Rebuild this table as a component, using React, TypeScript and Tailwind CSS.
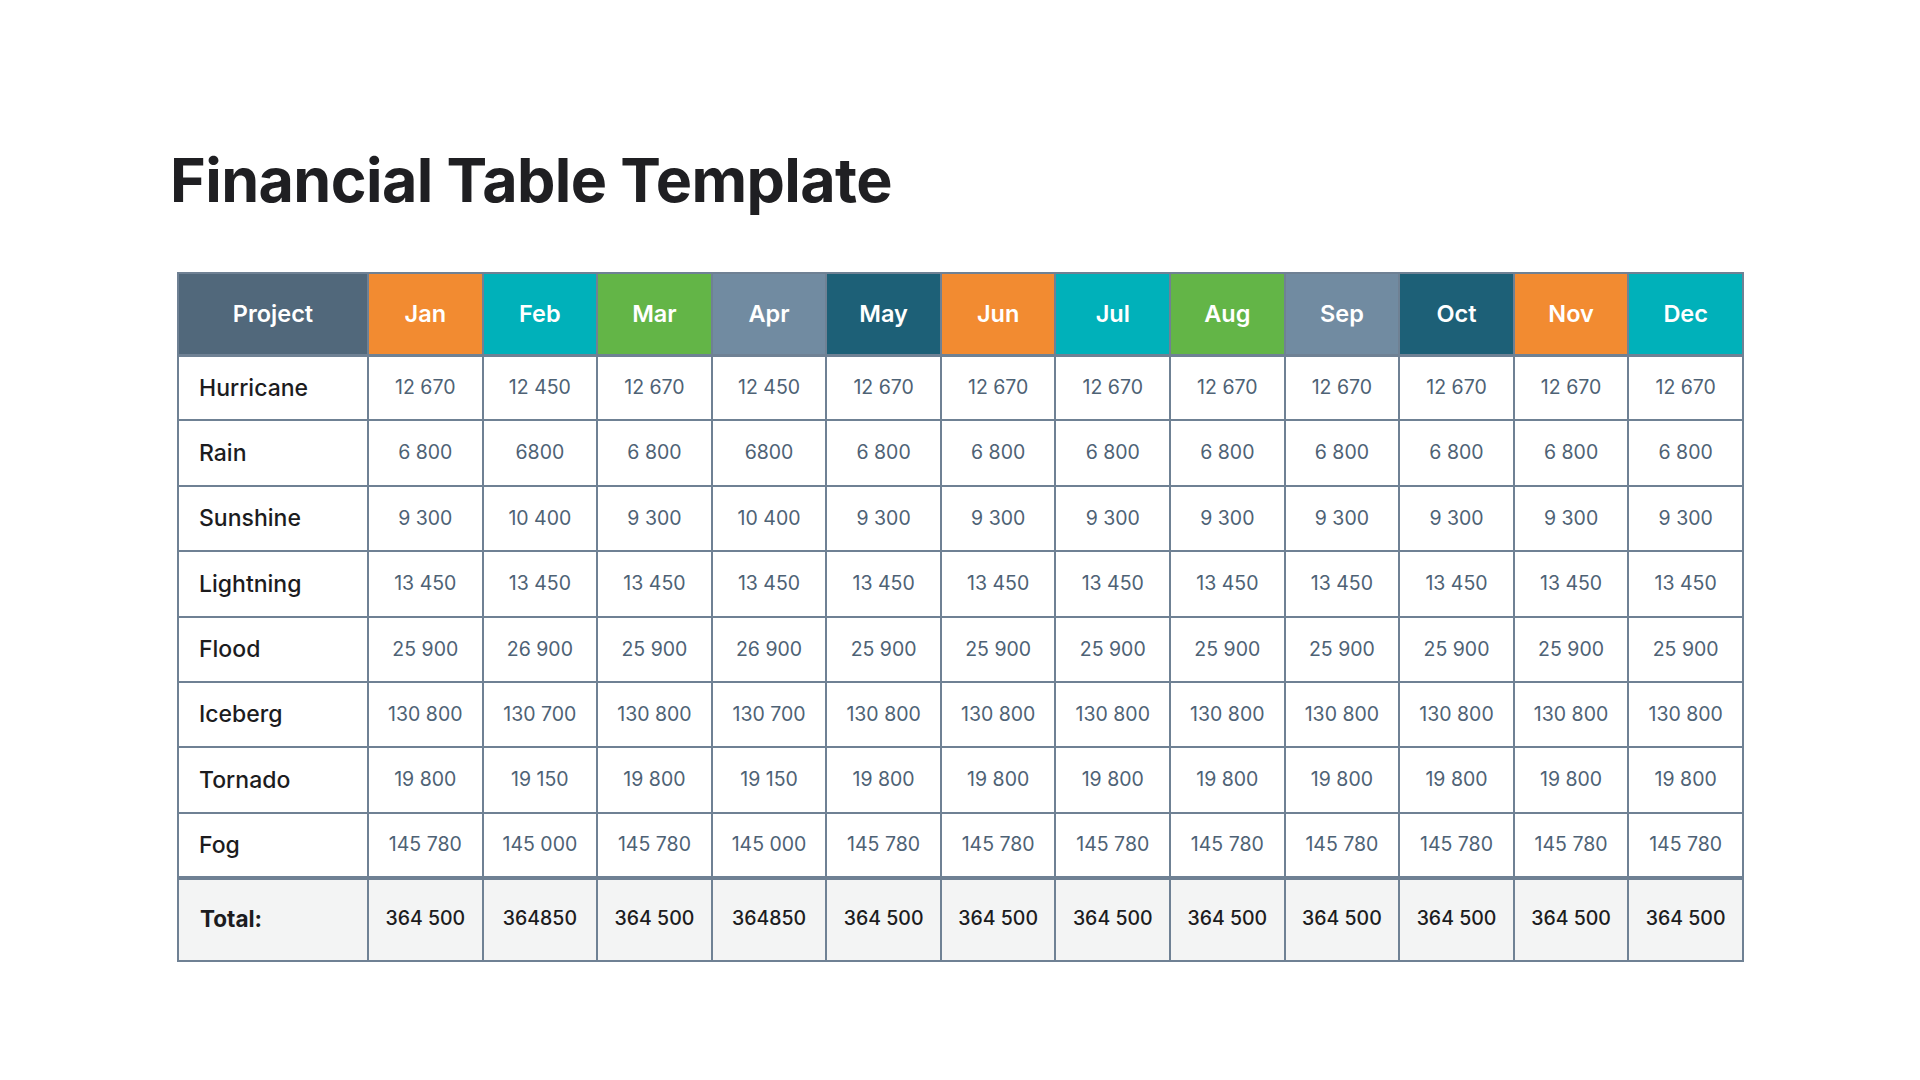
const months = [
  { name: "Jan", bg: "bg-[#f28b31]" },
  { name: "Feb", bg: "bg-[#00b1ba]" },
  { name: "Mar", bg: "bg-[#63b547]" },
  { name: "Apr", bg: "bg-[#718ba1]" },
  { name: "May", bg: "bg-[#1d6077]" },
  { name: "Jun", bg: "bg-[#f28b31]" },
  { name: "Jul", bg: "bg-[#00b1ba]" },
  { name: "Aug", bg: "bg-[#63b547]" },
  { name: "Sep", bg: "bg-[#718ba1]" },
  { name: "Oct", bg: "bg-[#1d6077]" },
  { name: "Nov", bg: "bg-[#f28b31]" },
  { name: "Dec", bg: "bg-[#00b1ba]" },
];

// the second and fourth month differ from the rest in each row
function row(a: string, b: string) {
  return [a, b, a, b, a, a, a, a, a, a, a, a];
}

const rows = [
  { name: "Hurricane", values: row("12 670", "12 450") },
  { name: "Rain", values: row("6 800", "6800") },
  { name: "Sunshine", values: row("9 300", "10 400") },
  { name: "Lightning", values: row("13 450", "13 450") },
  { name: "Flood", values: row("25 900", "26 900") },
  { name: "Iceberg", values: row("130 800", "130 700") },
  { name: "Tornado", values: row("19 800", "19 150") },
  { name: "Fog", values: row("145 780", "145 000") },
];

const totals = row("364 500", "364850");

export default function App() {
  return (
    <div className="w-[1920px] h-[1080px] bg-white font-['Inter','Liberation_Sans',sans-serif] flex flex-col">
      <h1 className="pl-[170px] pt-[142px] text-[61px] leading-[77px] font-bold tracking-[-0.6px] text-[#1f1f22]">
        Financial Table Template
      </h1>

      <table className="ml-[177px] mt-[53px] w-[1567px] table-fixed border-collapse border-2 border-[#6f8194]">
        <colgroup>
          <col className="w-[190px]" />
          {months.map((m) => (
            <col key={m.name} />
          ))}
        </colgroup>
        <thead>
          <tr className="h-[82px] border-b-[3px] border-[#6f8194]">
            <th className="bg-[#51687b] text-white text-[23.5px] font-semibold border-r-2 border-[#6f8194]">
              Project
            </th>
            {months.map((m) => (
              <th
                key={m.name}
                className={`${m.bg} text-white text-[23.5px] font-semibold border-r-2 border-[#6f8194]`}
              >
                {m.name}
              </th>
            ))}
          </tr>
        </thead>
        <tbody>
          {rows.map((r) => (
            <tr key={r.name} className="h-[65.4px] border-b-2 border-[#6f8194]">
              <td className="pl-[20px] text-[23px] font-medium text-[#1c1c1e] border-r-2 border-[#6f8194]">
                {r.name}
              </td>
              {r.values.map((v, i) => (
                <td
                  key={i}
                  className="text-center text-[19.5px] text-[#4e6275] border-r-2 border-[#6f8194]"
                >
                  {v}
                </td>
              ))}
            </tr>
          ))}
          <tr className="h-[83px] bg-[#f3f4f4] border-t-4 border-[#6f8194]">
            <td className="pl-[21px] text-[22.5px] font-bold text-[#1c1c1e] border-r-2 border-[#6f8194] pb-[3px]">
              Total:
            </td>
            {totals.map((v, i) => (
              <td
                key={i}
                className="text-center text-[19.5px] font-medium text-[#1c1c1e] border-r-2 border-[#6f8194] pb-[3px]"
              >
                {v}
              </td>
            ))}
          </tr>
        </tbody>
      </table>
    </div>
  );
}
